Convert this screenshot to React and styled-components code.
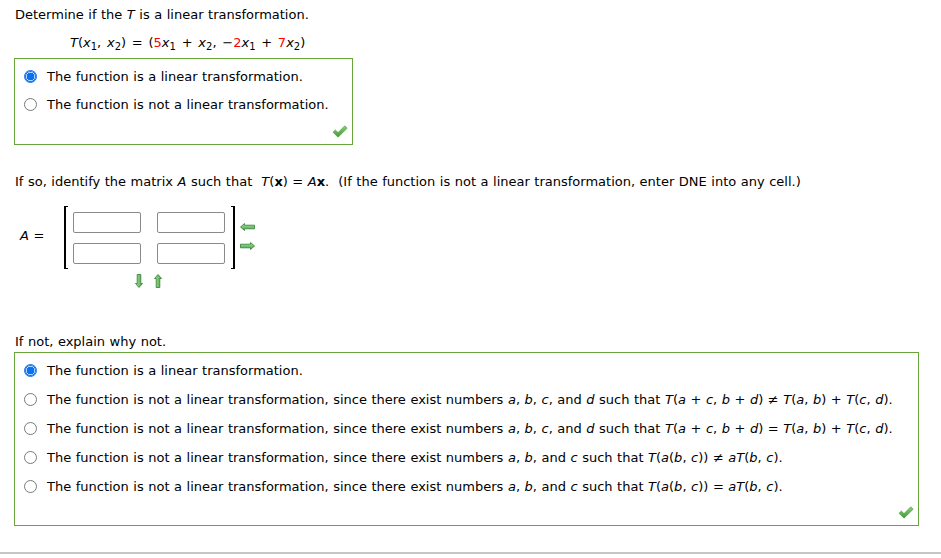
import React from 'react';
import styled, { createGlobalStyle } from 'styled-components';

const GlobalStyle = createGlobalStyle`
  html, body {
    margin: 0;
    padding: 0;
    background: #fff;
  }
  body {
    font-family: "DejaVu Sans", Verdana, sans-serif;
    font-size: 13px;
    color: #000;
    word-spacing: 0.4px;
  }
`;

const Page = styled.div`
  width: 941px;
  height: 558px;
  box-sizing: border-box;
  padding: 7px 0 0 15px;
  position: relative;
`;

const Line = styled.div`
  line-height: 16px;
  margin-top: ${(p) => p.$mt || 0}px;
  margin-left: ${(p) => p.$ml || 0}px;
  ${(p) => p.$ws && `word-spacing: ${p.$ws}px;`}
  white-space: nowrap;
`;

const I = styled.i`
  font-style: italic;
`;

const B = styled.b`
  font-weight: bold;
`;

const Red = styled.span`
  color: #f00;
`;

const Sub = styled.sub`
  font-size: 10px;
  vertical-align: -3px;
  line-height: 0;
`;

const AnswerBox = styled.div`
  box-sizing: border-box;
  width: ${(p) => p.$w}px;
  height: ${(p) => p.$h}px;
  margin-left: -1px;
  margin-top: ${(p) => p.$mt || 0}px;
  border: 1px solid #6aa53a;
  padding-top: ${(p) => p.$pt || 3}px;
  display: flex;
  flex-direction: column;
`;

const Option = styled.div`
  display: flex;
  align-items: center;
  height: ${(p) => p.$h}px;
  padding-left: 9px;
  white-space: nowrap;
`;

const OptionText = styled.span`
  white-space: pre;
`;

const Radio = styled.span`
  box-sizing: border-box;
  width: 13px;
  height: 13px;
  border-radius: 50%;
  flex: none;
  margin-right: 10px;
  border: 1px solid ${(p) => (p.$on ? '#0a72f0' : '#7a7a7a')};
  background: ${(p) =>
    p.$on ? 'radial-gradient(circle, #0a72f0 0 3.6px, #fff 4.2px)' : '#fff'};
  box-shadow: ${(p) => (p.$on ? 'inset 0 0 0 1px #0a72f0' : 'none')};
`;

const Footer = styled.div`
  flex: 1;
  display: flex;
  justify-content: flex-end;
  align-items: flex-end;
  padding: 0 4px 6px 0;
`;

const MatrixRow = styled.div`
  display: flex;
  align-items: flex-start;
  margin-top: 16px;
`;

const Label = styled.div`
  width: 49px;
  padding-left: 5px;
  box-sizing: border-box;
  line-height: 16px;
  margin-top: 22px;
`;

const MatrixCol = styled.div`
  display: flex;
  flex-direction: column;
  align-items: center;
`;

const Matrix = styled.div`
  display: flex;
  align-items: stretch;
`;

const Bracket = styled.div`
  width: 4px;
  height: 63px;
  box-sizing: border-box;
  border: 2px solid #000;
  border-width: 1px 0 1px 2px;
  ${(p) => p.$right && 'border-width: 1px 2px 1px 0;'}
`;

const Cells = styled.div`
  display: grid;
  grid-template-columns: 68px 68px;
  grid-auto-rows: 21px;
  column-gap: 16px;
  row-gap: 10px;
  padding: 6px 6px 0 5px;
`;

const Cell = styled.div`
  box-sizing: border-box;
  border: 1px solid #8a8a8a;
  border-radius: 2px;
  background: #fff;
`;

const SideArrows = styled.div`
  display: flex;
  flex-direction: column;
  gap: 11px;
  padding: 17px 0 0 5px;
`;

const BottomArrows = styled.div`
  display: flex;
  gap: 11px;
  margin-top: 5px;
  margin-left: -2px;
`;

const Rule = styled.div`
  position: absolute;
  left: 0;
  right: 0;
  top: 552px;
  height: 2px;
  background: #c6c6c6;
`;

function Check() {
  return (
    <svg width="16" height="13" viewBox="0 0 16 13">
      <defs>
        <linearGradient id="ck" x1="0" y1="0" x2="0" y2="1">
          <stop offset="0" stopColor="#8bd07a" />
          <stop offset="1" stopColor="#3f9a35" />
        </linearGradient>
      </defs>
      <path
        d="M1 7.2 L3.4 5 L6 7.6 L12.8 0.8 L15.2 3.2 L6 12.2 Z"
        fill="url(#ck)"
        stroke="#4b9b3c"
        strokeWidth="0.6"
        strokeLinejoin="round"
      />
    </svg>
  );
}

function HArrow({ dir }) {
  const d =
    dir === 'left'
      ? 'M0.5 4 L4.5 0.5 L4.5 2.2 L14.5 2.2 L14.5 5.8 L4.5 5.8 L4.5 7.5 Z'
      : 'M14.5 4 L10.5 0.5 L10.5 2.2 L0.5 2.2 L0.5 5.8 L10.5 5.8 L10.5 7.5 Z';
  return (
    <svg width="15" height="8" viewBox="0 0 15 8">
      <defs>
        <linearGradient id={`ha-${dir}`} x1="0" y1="0" x2="0" y2="1">
          <stop offset="0" stopColor="#a6dea0" />
          <stop offset="1" stopColor="#4aa548" />
        </linearGradient>
      </defs>
      <path d={d} fill={`url(#ha-${dir})`} stroke="#2f7d2f" strokeWidth="0.8" strokeLinejoin="round" />
    </svg>
  );
}

function VArrow({ dir }) {
  const d =
    dir === 'down'
      ? 'M4 13.5 L0.5 9.5 L2.2 9.5 L2.2 0.5 L5.8 0.5 L5.8 9.5 L7.5 9.5 Z'
      : 'M4 0.5 L0.5 4.5 L2.2 4.5 L2.2 13.5 L5.8 13.5 L5.8 4.5 L7.5 4.5 Z';
  return (
    <svg width="8" height="14" viewBox="0 0 8 14">
      <defs>
        <linearGradient id={`va-${dir}`} x1="0" y1="0" x2="1" y2="0">
          <stop offset="0" stopColor="#a6dea0" />
          <stop offset="1" stopColor="#4aa548" />
        </linearGradient>
      </defs>
      <path d={d} fill={`url(#va-${dir})`} stroke="#2f7d2f" strokeWidth="0.8" strokeLinejoin="round" />
    </svg>
  );
}

const lead = 'The function is not a linear transformation, since there exist numbers ';

export default function App() {
  return (
    <>
      <GlobalStyle />
      <Page>
        <Line>
          Determine if the <I>T</I> is a linear transformation.
        </Line>
        <Line $mt={12} $ml={55} $ws={1.6}>
          <I>T</I>(<I>x</I>
          <Sub>1</Sub>, <I>x</I>
          <Sub>2</Sub>) = (<Red>5</Red>
          <I>x</I>
          <Sub>1</Sub> + <I>x</I>
          <Sub>2</Sub>, &minus;<Red>2</Red>
          <I>x</I>
          <Sub>1</Sub> + <Red>7</Red>
          <I>x</I>
          <Sub>2</Sub>)
        </Line>

        <AnswerBox $w={339} $h={87} $mt={7} $pt={3}>
          <Option $h={28}>
            <Radio $on />
            <OptionText>The function is a linear transformation.</OptionText>
          </Option>
          <Option $h={28}>
            <Radio />
            <OptionText>The function is not a linear transformation.</OptionText>
          </Option>
          <Footer>
            <Check />
          </Footer>
        </AnswerBox>

        <Line $mt={29}>
          If so, identify the matrix <I>A</I> such that&nbsp; <I>T</I>(<B>x</B>) = <I>A</I>
          <B>x</B>.&nbsp; (If the function is not a linear transformation, enter DNE into any cell.)
        </Line>

        <MatrixRow>
          <Label>
            <I>A</I> =
          </Label>
          <MatrixCol>
            <Matrix>
              <Bracket />
              <Cells>
                <Cell />
                <Cell />
                <Cell />
                <Cell />
              </Cells>
              <Bracket $right />
            </Matrix>
            <BottomArrows>
              <VArrow dir="down" />
              <VArrow dir="up" />
            </BottomArrows>
          </MatrixCol>
          <SideArrows>
            <HArrow dir="left" />
            <HArrow dir="right" />
          </SideArrows>
        </MatrixRow>

        <Line $mt={46}>If not, explain why not.</Line>

        <AnswerBox $w={905} $h={174} $mt={2} $pt={3}>
          <Option $h={29}>
            <Radio $on />
            <OptionText>The function is a linear transformation.</OptionText>
          </Option>
          <Option $h={29}>
            <Radio />
            <OptionText>
              {lead}
              <I>a</I>, <I>b</I>, <I>c</I>, and <I>d</I> such that <I>T</I>(<I>a</I> + <I>c</I>, <I>b</I> + <I>d</I>) &ne; <I>T</I>(<I>a</I>, <I>b</I>) + <I>T</I>(<I>c</I>, <I>d</I>).
            </OptionText>
          </Option>
          <Option $h={29}>
            <Radio />
            <OptionText>
              {lead}
              <I>a</I>, <I>b</I>, <I>c</I>, and <I>d</I> such that <I>T</I>(<I>a</I> + <I>c</I>, <I>b</I> + <I>d</I>) = <I>T</I>(<I>a</I>, <I>b</I>) + <I>T</I>(<I>c</I>, <I>d</I>).
            </OptionText>
          </Option>
          <Option $h={29}>
            <Radio />
            <OptionText>
              {lead}
              <I>a</I>, <I>b</I>, and <I>c</I> such that <I>T</I>(<I>a</I>(<I>b</I>, <I>c</I>)) &ne; <I>a</I><I>T</I>(<I>b</I>, <I>c</I>).
            </OptionText>
          </Option>
          <Option $h={29}>
            <Radio />
            <OptionText>
              {lead}
              <I>a</I>, <I>b</I>, and <I>c</I> such that <I>T</I>(<I>a</I>(<I>b</I>, <I>c</I>)) = <I>a</I><I>T</I>(<I>b</I>, <I>c</I>).
            </OptionText>
          </Option>
          <Footer>
            <Check />
          </Footer>
        </AnswerBox>
        <Rule />
      </Page>
    </>
  );
}
